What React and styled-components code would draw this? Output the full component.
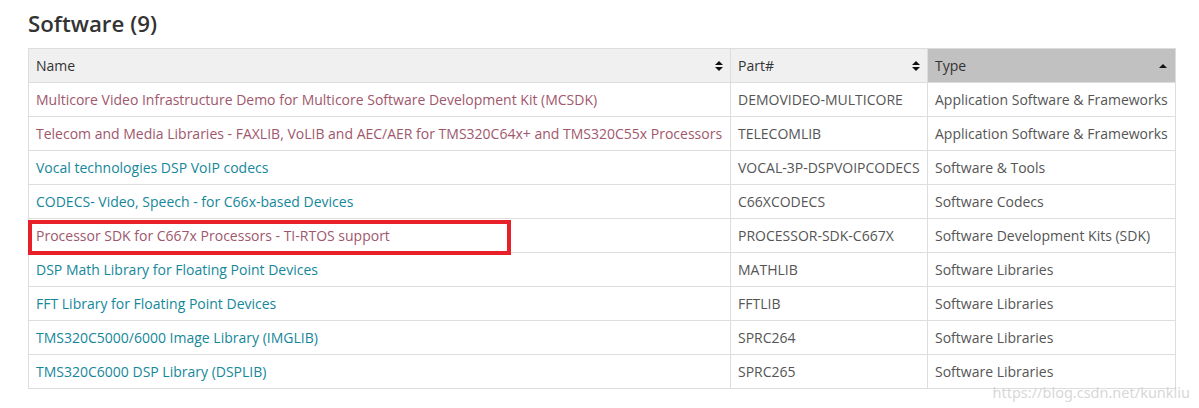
import React from 'react';
import styled, { createGlobalStyle } from 'styled-components';

const GlobalStyle = createGlobalStyle`
  html, body {
    margin: 0;
    padding: 0;
    background: #fff;
  }
  body {
    font-family: "Open Sans", "Noto Sans", Arial, sans-serif;
    color: #555;
  }
`;

const Page = styled.div`
  position: relative;
  display: flex;
  flex-direction: column;
  gap: 8px;
  width: 1199px;
  height: 408px;
  padding: 8px 0 0 28px;
  box-sizing: border-box;
`;

const Heading = styled.h2`
  margin: 0;
  font-size: 22.3px;
  font-weight: 600;
  line-height: 32px;
  color: #333;
`;

const Table = styled.table`
  width: 1147px;
  border-collapse: collapse;
  table-layout: fixed;
  font-size: 14px;
`;

const HeadCell = styled.th`
  height: 33px;
  padding: 0 8px 0 7px;
  text-align: left;
  font-weight: 400;
  color: #333;
  background: ${p => (p.$active ? '#c1c1c1' : '#f0f0f0')};
  border: 1px solid #ddd;
`;

const HeadInner = styled.div`
  display: flex;
  align-items: center;
  justify-content: space-between;
`;

const SortBoth = styled.span`
  display: flex;
  flex-direction: column;
  gap: 2px;
  margin-right: -1px;
  &::before, &::after {
    content: '';
    border-left: 4px solid transparent;
    border-right: 4px solid transparent;
  }
  &::before { border-bottom: 4px solid #111; }
  &::after { border-top: 4px solid #111; }
`;

const SortUp = styled.span`
  margin-top: 1px;
  border-left: 4px solid transparent;
  border-right: 4px solid transparent;
  border-bottom: 4px solid #111;
`;

const Cell = styled.td`
  position: relative;
  height: 33px;
  padding: 0 8px 0 7px;
  border: 1px solid #ddd;
  white-space: nowrap;
  color: #555;
`;

const Link = styled.a`
  color: ${p => (p.$visited ? '#a0576c' : '#15879a')};
  text-decoration: none;
`;

const Highlight = styled.span`
  position: absolute;
  left: -1px;
  top: 1px;
  width: 483px;
  height: 35px;
  box-sizing: border-box;
  border: 4px solid #e8202a;
  pointer-events: none;
`;

const Watermark = styled.div`
  position: absolute;
  right: 9px;
  bottom: 6px;
  font-family: "Noto Sans", "Open Sans", Arial, sans-serif;
  font-size: 14.5px;
  color: rgba(205, 205, 205, 0.8);
`;

const rows = [
  ['Multicore Video Infrastructure Demo for Multicore Software Development Kit (MCSDK)', 'DEMOVIDEO-MULTICORE', 'Application Software & Frameworks', true],
  ['Telecom and Media Libraries - FAXLIB, VoLIB and AEC/AER for TMS320C64x+ and TMS320C55x Processors', 'TELECOMLIB', 'Application Software & Frameworks', true],
  ['Vocal technologies DSP VoIP codecs', 'VOCAL-3P-DSPVOIPCODECS', 'Software & Tools', false],
  ['CODECS- Video, Speech - for C66x-based Devices', 'C66XCODECS', 'Software Codecs', false],
  ['Processor SDK for C667x Processors - TI-RTOS support', 'PROCESSOR-SDK-C667X', 'Software Development Kits (SDK)', true, true],
  ['DSP Math Library for Floating Point Devices', 'MATHLIB', 'Software Libraries', false],
  ['FFT Library for Floating Point Devices', 'FFTLIB', 'Software Libraries', false],
  ['TMS320C5000/6000 Image Library (IMGLIB)', 'SPRC264', 'Software Libraries', false],
  ['TMS320C6000 DSP Library (DSPLIB)', 'SPRC265', 'Software Libraries', false],
];

export default function App() {
  return (
    <>
      <GlobalStyle />
      <Page>
        <Heading>Software (9)</Heading>
        <Table>
          <colgroup>
            <col style={{ width: 702 }} />
            <col style={{ width: 197 }} />
            <col style={{ width: 248 }} />
          </colgroup>
          <thead>
            <tr>
              <HeadCell><HeadInner>Name<SortBoth /></HeadInner></HeadCell>
              <HeadCell><HeadInner>Part#<SortBoth /></HeadInner></HeadCell>
              <HeadCell $active><HeadInner>Type<SortUp /></HeadInner></HeadCell>
            </tr>
          </thead>
          <tbody>
            {rows.map(([name, part, type, visited, marked]) => (
              <tr key={part}>
                <Cell>
                  <Link href="#" $visited={visited}>{name}</Link>
                  {marked && <Highlight />}
                </Cell>
                <Cell>{part}</Cell>
                <Cell>{type}</Cell>
              </tr>
            ))}
          </tbody>
        </Table>
        <Watermark>https://blog.csdn.net/kunkliu</Watermark>
      </Page>
    </>
  );
}
